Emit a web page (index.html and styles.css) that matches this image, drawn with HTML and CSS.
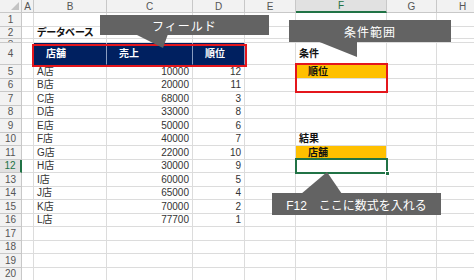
FILE: index.html
```html
<!DOCTYPE html>
<html lang="ja">
<head>
<meta charset="utf-8">
<link rel="stylesheet" href="styles.css">
</head>
<body>
<div class="sheet">
  <div class="c h corner"><span class="tri"></span></div><div class="c h">A</div><div class="c h">B</div><div class="c h">C</div><div class="c h">D</div><div class="c h">E</div><div class="c h hsel">F</div><div class="c h">G</div><div class="c h">H</div>

  <div class="c rh">1</div><div class="c"></div><div class="c"></div><div class="c"></div><div class="c"></div><div class="c"></div><div class="c"></div><div class="c"></div><div class="c"></div>

  <div class="c rh">2</div><div class="c"></div><div class="c b">データベース</div><div class="c"></div><div class="c"></div><div class="c"></div><div class="c"></div><div class="c"></div><div class="c"></div>

  <div class="c rh r3">3</div><div class="c"></div><div class="c"></div><div class="c"></div><div class="c"></div><div class="c"></div><div class="c"></div><div class="c"></div><div class="c"></div>

  <div class="c rh">4</div><div class="c"></div><div class="c navy">店舗</div><div class="c navy">売上</div><div class="c navy">順位</div><div class="c"></div><div class="c b">条件</div><div class="c"></div><div class="c"></div>

  <div class="c rh">5</div><div class="c"></div><div class="c">A店</div><div class="c n">10000</div><div class="c n">12</div><div class="c"></div><div class="c yel">順位</div><div class="c"></div><div class="c"></div>
  <div class="c rh">6</div><div class="c"></div><div class="c">B店</div><div class="c n">20000</div><div class="c n">11</div><div class="c"></div><div class="c"></div><div class="c"></div><div class="c"></div>
  <div class="c rh">7</div><div class="c"></div><div class="c">C店</div><div class="c n">68000</div><div class="c n">3</div><div class="c"></div><div class="c"></div><div class="c"></div><div class="c"></div>
  <div class="c rh">8</div><div class="c"></div><div class="c">D店</div><div class="c n">33000</div><div class="c n">8</div><div class="c"></div><div class="c"></div><div class="c"></div><div class="c"></div>
  <div class="c rh">9</div><div class="c"></div><div class="c">E店</div><div class="c n">50000</div><div class="c n">6</div><div class="c"></div><div class="c"></div><div class="c"></div><div class="c"></div>
  <div class="c rh">10</div><div class="c"></div><div class="c">F店</div><div class="c n">40000</div><div class="c n">7</div><div class="c"></div><div class="c b">結果</div><div class="c"></div><div class="c"></div>
  <div class="c rh">11</div><div class="c"></div><div class="c">G店</div><div class="c n">22000</div><div class="c n">10</div><div class="c"></div><div class="c yel">店舗</div><div class="c"></div><div class="c"></div>
  <div class="c rh rsel">12</div><div class="c"></div><div class="c">H店</div><div class="c n">30000</div><div class="c n">9</div><div class="c"></div><div class="c"></div><div class="c"></div><div class="c"></div>
  <div class="c rh">13</div><div class="c"></div><div class="c">I店</div><div class="c n">60000</div><div class="c n">5</div><div class="c"></div><div class="c"></div><div class="c"></div><div class="c"></div>
  <div class="c rh">14</div><div class="c"></div><div class="c">J店</div><div class="c n">65000</div><div class="c n">4</div><div class="c"></div><div class="c"></div><div class="c"></div><div class="c"></div>
  <div class="c rh">15</div><div class="c"></div><div class="c">K店</div><div class="c n">70000</div><div class="c n">2</div><div class="c"></div><div class="c"></div><div class="c"></div><div class="c"></div>
  <div class="c rh">16</div><div class="c"></div><div class="c">L店</div><div class="c n">77700</div><div class="c n">1</div><div class="c"></div><div class="c"></div><div class="c"></div><div class="c"></div>
  <div class="c rh">17</div><div class="c"></div><div class="c"></div><div class="c"></div><div class="c"></div><div class="c"></div><div class="c"></div><div class="c"></div><div class="c"></div>
  <div class="c rh">18</div><div class="c"></div><div class="c"></div><div class="c"></div><div class="c"></div><div class="c"></div><div class="c"></div><div class="c"></div><div class="c"></div>
  <div class="c rh">19</div><div class="c"></div><div class="c"></div><div class="c"></div><div class="c"></div><div class="c"></div><div class="c"></div><div class="c"></div><div class="c"></div>
  <div class="c rh">20</div><div class="c"></div><div class="c"></div><div class="c"></div><div class="c"></div><div class="c"></div><div class="c"></div><div class="c"></div><div class="c"></div>

  <div class="redbox box-field"></div>
  <div class="redbox box-cond"></div>
  <div class="selbox"><span class="handle"></span></div>

  <div class="callout co-field">フィールド<span class="tail"></span></div>
  <div class="callout co-cond">条件範囲<span class="tail"></span></div>
  <div class="callout co-f12">F12　ここに数式を入れる<span class="tail"></span></div>
</div>
</body>
</html>
```

FILE: styles.css
```css
* { box-sizing: border-box; margin: 0; padding: 0; }
html, body { background: #fff; }
body {
  width: 474px;
  height: 280px;
  overflow: hidden;
  font-family: "Liberation Sans", "Noto Sans CJK JP", sans-serif;
  font-size: 10px;
  color: #333;
}
.sheet {
  position: relative;
  display: grid;
  grid-template-columns: 22px 12px 73px 86px 52px 51px 91px 50px 52px;
  grid-template-rows: 13px 14px 12px 4px 22px repeat(16, 13.5px);
  width: 489px;
}
.c {
  border-right: 1px solid #dcdcdc;
  border-bottom: 1px solid #dcdcdc;
  display: flex;
  align-items: center;
  padding: 0 3px;
  white-space: nowrap;
  line-height: 11px;
  font-feature-settings: "palt";
}
.h, .rh {
  background: #f2f2f2;
  border-color: #c8c8c8;
  color: #555;
  justify-content: center;
  padding: 0;
}
.h { font-size: 10px; }
.rh { font-size: 10px; }
.corner { position: relative; }
.tri {
  position: absolute;
  right: 2px;
  bottom: 2px;
  width: 0;
  height: 0;
  border-left: 8px solid transparent;
  border-bottom: 8px solid #c3c3c3;
}
.hsel {
  background: #e1e1e1;
  border-bottom: 2px solid #217346;
  color: #217346;
}
.rsel {
  background: #e1e1e1;
  border-right: 2px solid #217346;
  color: #217346;
}
.r3 {
  align-items: flex-start;
  overflow: hidden;
  padding-top: 0;
}
.b { font-weight: bold; color: #111; }
.n { justify-content: flex-end; }
.navy {
  background: #002060;
  color: #fff;
  font-weight: bold;
  padding-left: 12px;
  border-right-color: #8a9cc0;
  border-bottom-color: #002060;
}
.yel {
  background: #ffc000;
  color: #111;
  font-weight: bold;
  padding-left: 12px;
}

.redbox {
  position: absolute;
  border: 2px solid #e4161c;
}
.box-field { left: 32px; top: 44px; width: 215px; height: 23px; }
.box-cond { left: 295px; top: 63px; width: 93px; height: 30px; }

.selbox {
  position: absolute;
  left: 295px;
  top: 158px;
  width: 93px;
  height: 16px;
  border: 2px solid #217346;
}
.handle {
  position: absolute;
  right: -4px;
  bottom: -4px;
  width: 5px;
  height: 5px;
  background: #217346;
  border: 1px solid #fff;
}

.callout {
  position: absolute;
  background: #636363;
  color: #fff;
  font-family: "Noto Sans CJK JP", sans-serif;
  font-size: 12px;
  display: flex;
  align-items: center;
  justify-content: center;
  white-space: nowrap;
}
.tail {
  position: absolute;
  background: #636363;
}
.co-field { left: 100px; top: 15px; width: 169px; height: 20px; letter-spacing: 1px; }
.co-field .tail {
  left: 35px; top: 19px; width: 33px; height: 14px;
  clip-path: polygon(0 0, 28px 14px, 33px 0);
}
.co-cond { left: 289px; top: 20px; width: 162px; height: 22px; letter-spacing: 1px; }
.co-cond .tail {
  left: 28px; top: 21px; width: 40px; height: 16px;
  clip-path: polygon(0 0, 40px 16px, 40px 0);
}
.co-f12 { left: 272px; top: 193px; width: 169px; height: 22px; font-family: "Liberation Sans", "Noto Sans CJK JP", sans-serif; }
.co-f12 .tail {
  left: 29px; top: -21px; width: 41px; height: 22px;
  clip-path: polygon(0 22px, 26px 0, 41px 22px);
}
```
